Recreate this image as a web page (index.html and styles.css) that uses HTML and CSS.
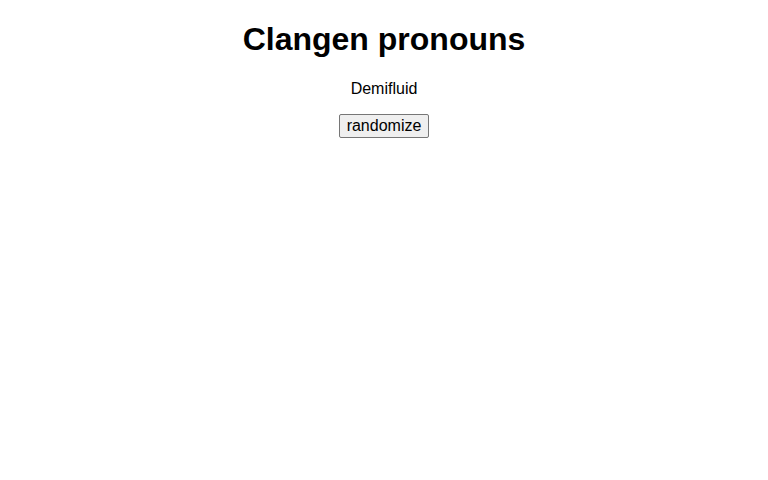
FILE: index.html
```html
<!DOCTYPE html>
<html>
<head>
<meta charset="utf-8">
<title>Clangen pronouns</title>
<link rel="stylesheet" href="styles.css">
</head>
<body>
<main class="page">
  <h1 class="title">Clangen pronouns</h1>
  <p class="result">Demifluid</p>
  <button class="btn" type="button">randomize</button>
</main>
</body>
</html>
```
FILE: styles.css
```css
body {
  margin: 0 8px;
  font-family: "Liberation Sans", Arial, sans-serif;
  color: #000;
  background: #fff;
}
.page {
  text-align: center;
  padding-top: 21.44px;
}
.title {
  font-size: 32px;
  font-weight: bold;
  margin: 0 0 21.44px;
}
.result {
  font-size: 16px;
  margin: 16px 0;
}
.btn {
  font-family: "Liberation Sans", Arial, sans-serif;
  font-size: 16px;
  color: #000;
  background: #efefef;
  border: 1px solid #767676;
  border-radius: 2px;
  padding: 2px 7px;
}
```
